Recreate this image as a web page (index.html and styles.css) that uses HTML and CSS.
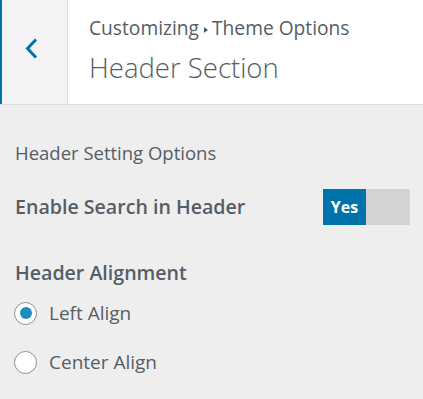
FILE: index.html
```html
<!DOCTYPE html>
<html lang="en">
<head>
  <meta charset="UTF-8" />
  <meta name="viewport" content="width=device-width, initial-scale=1.0" />
  <title>Header Section</title>
  <link rel="stylesheet" href="styles.css">
</head>
<body>
  <div class="section-header">
    <button class="back-btn" aria-label="Back">
      <svg width="15" height="21" viewBox="0 0 15 21">
        <path d="M12 1.5 L3.5 10.5 L12 19.5" fill="none" stroke="#0073aa" stroke-width="3" />
      </svg>
    </button>
    <div class="section-title">
      <span class="crumb">Customizing<span class="sep"></span>Theme Options</span>
      <h3>Header Section</h3>
    </div>
  </div>

  <div class="controls">
    <p class="group-title">Header Setting Options</p>

    <div class="control-row">
      <span class="control-label">Enable Search in Header</span>
      <div class="toggle">
        <span class="toggle-on">Yes</span>
        <span class="toggle-off"></span>
      </div>
    </div>

    <span class="control-label align-label">Header Alignment</span>
    <label class="radio">
      <input type="radio" name="header_align" checked>
      <span>Left Align</span>
    </label>
    <label class="radio">
      <input type="radio" name="header_align">
      <span>Center Align</span>
    </label>
  </div>
</body>
</html>
```

FILE: styles.css
```css
* {
  box-sizing: border-box;
}

body {
  margin: 0;
  font-family: 'Open Sans', sans-serif;
  background-color: #eeeeee;
  color: #555d66;
}

.section-header {
  display: flex;
  height: 105px;
  background-color: #ffffff;
  border-bottom: 1px solid #dddddd;
}

.back-btn {
  width: 68px;
  background-color: #f3f3f5;
  border: none;
  border-left: 2px solid #0073aa;
  border-right: 1px solid #dddddd;
  display: flex;
  align-items: flex-start;
  padding: 38px 0 0 22px;
  cursor: pointer;
}

.section-title {
  padding: 15px 0 0 21px;
}

.crumb {
  display: block;
  font-size: 19.2px;
  line-height: 26px;
}

/* little arrow between breadcrumb parts */
.crumb .sep {
  display: inline-block;
  width: 0;
  height: 0;
  margin: 0 4px 0 5px;
  border-left: 4px solid #555d66;
  border-top: 3px solid transparent;
  border-bottom: 3px solid transparent;
  vertical-align: 2px;
}

.section-title h3 {
  margin: 8px 0 0;
  font-size: 27.5px;
  font-weight: 300;
  line-height: 38px;
}

.controls {
  padding: 0 15px;
}

.group-title {
  margin: 0;
  padding-top: 35px;
  font-size: 18.5px;
  line-height: 26px;
}

.control-row {
  display: flex;
  align-items: center;
  justify-content: space-between;
  margin: 23px -2px 0 0;
}

.control-label {
  display: block;
  font-size: 19.6px;
  font-weight: 600;
  line-height: 28px;
}

.align-label {
  margin-top: 34px;
}

.toggle {
  display: flex;
  width: 87px;
  height: 36px;
}

.toggle-on {
  width: 43px;
  background-color: #0073aa;
  color: #ffffff;
  font-weight: 700;
  font-size: 16px;
  display: flex;
  align-items: center;
  justify-content: center;
}

.toggle-off {
  flex: 1;
  background-color: #d3d3d3;
}

.radio {
  display: flex;
  align-items: center;
  gap: 12px;
  margin-top: 14px;
  font-size: 19px;
  line-height: 24px;
}

.radio + .radio {
  margin-top: 25px;
}

.radio input {
  appearance: none;
  margin: 0 0 0 -1px;
  width: 23px;
  height: 23px;
  border: 1px solid #8c8f94;
  border-radius: 50%;
  background-color: #ffffff;
  display: flex;
  align-items: center;
  justify-content: center;
}

.radio input:checked::before {
  content: "";
  width: 12px;
  height: 12px;
  border-radius: 50%;
  background-color: #1e8cbe;
}
```
